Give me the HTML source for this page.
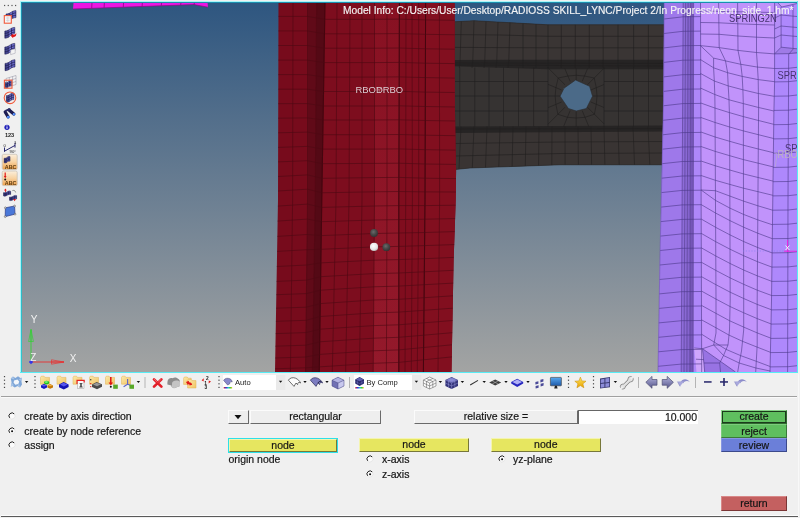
<!DOCTYPE html>
<html><head><meta charset="utf-8"><title>HyperMesh</title><style>
html,body{margin:0;padding:0;}
body{width:800px;height:518px;overflow:hidden;background:#f0f0f0;position:relative;font-family:"Liberation Sans",sans-serif;color:#111;}
#root{position:absolute;left:0;top:0;width:800px;height:518px;overflow:hidden;background:#f0f0f0;will-change:transform;}
.abs{position:absolute;}
#vp{position:absolute;left:20px;top:1px;width:778px;height:372px;background:#58ecf5;}
#vp::before{content:"";position:absolute;left:0;top:0;width:777px;height:371px;box-sizing:border-box;border-left:1px solid #a8f5f8;border-top:1px solid #a8f5f8;}
#vp::after{content:"";position:absolute;left:1px;top:1px;width:776px;height:370px;box-sizing:border-box;border-top:1px solid #1a8eae;background:linear-gradient(#1a8eae,#30c8d0) left top/1px 100% no-repeat;}
#vpin{position:absolute;left:2px;top:2px;width:775px;height:369px;overflow:hidden;background:linear-gradient(#2e5680,#a3a4a3);}
.t{position:absolute;white-space:nowrap;font-size:10.5px;line-height:14px;color:#151515;-webkit-text-stroke:0.2px #151515;}
.btn{position:absolute;box-sizing:border-box;text-align:center;font-size:10.5px;line-height:13px;color:#151515;white-space:nowrap;-webkit-text-stroke:0.2px #151515;}
.gray{background:#eeeeee;border-top:1px solid #fbfbfb;border-left:1px solid #fbfbfb;border-right:1px solid #6a6a6a;border-bottom:1px solid #6a6a6a;}
.yel{background:#e6e660;border-top:1px solid #f4f4b0;border-left:1px solid #f4f4b0;border-right:1px solid #77773a;border-bottom:1px solid #77773a;}
.radio{position:absolute;width:7px;height:7px;box-sizing:border-box;border-radius:50%;border:1px solid #777;border-right-color:#eee;border-bottom-color:#eee;background:#f6f6f6;}
.radio.on::after{content:"";position:absolute;left:1.5px;top:1.5px;width:2.5px;height:2.5px;border-radius:50%;background:#111;}
</style></head><body>
<div id="root">
<div id="vp"><div id="vpin"><svg width="775" height="369" viewBox="22 3 775 369" style="position:absolute;left:0;top:0;display:block">
<path d="M73.6 2 L73 9 L194 4.6 L208 7.2 L207.5 2 Z" fill="#ec16e2"/>
<path d="M92 2 L91.7 8.3 M104.4 2 L104.1 7.9 M123.6 2 L123.3 7.2 M142.4 2 L142.1 6.5 M161.6 2 L161.3 5.8 M181 2 L180.7 5.1 M194.4 2 L194.1 4.8 " stroke="#7a0a76" stroke-width="0.7" fill="none"/>
<path d="M73 9 L194 4.6 L208 7.2" stroke="#8a0c84" stroke-width="0.7" fill="none"/>
<path d="M454 21.8 L474 20.7 L548 24.8 L664 24.8 L664 164.8 L560 164.8 L470 168 L455 169.5 Z" fill="#363332"/>
<path d="M454 21.8 L474 20.7 L548 24.8 L664 24.8 L664 60 L454 60 Z" fill="#3a3534"/>
<path d="M454 132 L664 131 L664 164.8 L560 164.8 L470 168 L455 169.5 Z" fill="#393433"/>
<path d="M454 59.9 L664 59.8 L664 69.2 L548 69.2 L500 67.8 L454 66.2 Z" fill="#262424"/>
<path d="M454 126.5 L664 125.5 L664 131.5 L454 133 Z" fill="#262424"/>
<path d="M461.3 21.4 L460.1 60.2 M474 20.7 L472.8 60.2 M486 21.4 L484.8 60.2 M498 22 L496.8 60.2 M510 22.7 L508.8 60.2 M523 23.4 L523 60.2 M536 24.1 L536 60.2 M548 24.8 L548 60.2 M561.3 24.8 L561.3 60.2 M575.3 24.8 L575.3 60.2 M589.3 24.8 L589.3 60.2 M603.2 24.8 L603.2 60.2 M618 24.8 L618 60.2 M633.6 24.8 L633.6 60.2 M648.4 24.8 L648.4 60.2 M454 34.6 L500 35 L548 36.3 L664 36.3 M454 47.4 L548 47.8 L664 47.8 M454 63 L664 63.5 M454 65 L664 66 M460.1 60.2 L459.3 68 M472.8 60.2 L472 68 M484.8 60.2 L484 68 M496.8 60.2 L496 68 M508.8 60.2 L508 68 M523 60.2 L523 68 M536 60.2 L536 68 M548 60.2 L548 68 M561.3 60.2 L561.3 68 M575.3 60.2 L575.3 68 M589.3 60.2 L589.3 68 M603.2 60.2 L603.2 68 M618 60.2 L618 68 M633.6 60.2 L633.6 68 M648.4 60.2 L648.4 68 M459.8 67.5 L459.8 126.5 M474.8 67.5 L474.8 126.5 M489 67.5 L489 126.5 M503.5 67.5 L503.5 126.5 M518.5 67.5 L518.5 126.5 M533.6 67.5 L533.6 126.5 M548 67.5 L548 126.5 M604 67.5 L604 126.5 M618.5 67.5 L618.5 126.5 M633.5 67.5 L633.5 126.5 M648.5 67.5 L648.5 126.5 M455 81.5 L548 81.5 M604 81.5 L664 81.5 M455 96 L548 96 M604 96 L664 96 M455 111 L548 111 M604 111 L664 111 M576.2 80.2 L576.2 68.5 M582.2 81.4 L587.6 68.5 M587.4 84.8 L603.7 68.5 M590.8 90 L604 84.5 M592 96 L604 96 M590.8 102 L604 107.5 M587.4 107.2 L604 123.8 M582.2 110.6 L588.8 126.5 M576.2 111.8 L576.2 126.5 M570.2 110.6 L563.6 126.5 M565 107.2 L548 124.2 M561.6 102 L548 107.7 M560.4 96 L548 96 M561.6 90 L548 84.3 M565 84.8 L548.7 68.5 M570.2 81.4 L564.8 68.5 M576.2 75.3 L584.5 76 L594.2 78 L596.3 87.7 L597 96 L596.3 104.3 L594.4 114.2 L585 117.3 L576.2 118 L567.4 117.3 L557.9 114.3 L555.9 104.4 L555.2 96 L555.9 87.6 L558.2 78 L567.9 76 L576.2 75.3 M454 129 L664 128.5 M461 126.5 L459 168.9 M474 126.5 L472.3 167.9 M487 126.5 L485.5 167.4 M500 126.5 L498.8 166.9 M513 126.5 L512.1 166.5 M526 126.5 L525.3 166 M539 126.5 L538.6 165.5 M552 126.5 L551.8 165.1 M565 126.5 L565.1 164.8 M578 126.5 L578.4 164.8 M591 126.5 L591.6 164.8 M604 126.5 L604.9 164.8 M618 126.5 L619.2 164.8 M633 126.5 L634.5 164.8 M648 126.5 L649.8 164.8 M455 143.5 L560 142 L664 141.5 M455 156 L560 153.5 L664 153 " stroke="#201e1e" stroke-width="0.6" fill="none"/>
<path d="M575.6 80 L589.6 86.3 L592.5 96.2 L586.4 108.5 L576.3 111 L568.4 108.5 L560.1 96.2 L564 88.2 Z" fill="#4b6a88" stroke="#2a2a2c" stroke-width="0.6"/>
<path d="M454 21.8 L474 20.7 L548 24.8 L664 24.8" stroke="#2a2928" stroke-width="0.6" fill="none"/>
<path d="M664 164.8 L560 164.8 L470 168 L455 169.5" stroke="#2a2928" stroke-width="0.6" fill="none"/>
<path d="M278.5 2 L278 200 L275 372 L451.5 372 L453.6 260 L454.7 230 L455.7 200 L456.1 170 L455.6 150 L454.8 100 L454.6 2 Z" fill="#770b1c"/>
<path d="M307.5 2 L307.5 200 L305.5 372 L312.4 372 L315.2 200 L316.6 2 Z" fill="#600a18"/>
<path d="M316.6 2 L315.2 200 L312.4 372 L319.3 372 L321.8 200 L325 2 Z" fill="#540915"/>
<path d="M325 2 L321.8 200 L319.3 372 L373.2 372 L374.5 200 L374.5 2 Z" fill="#7d0d1e"/>
<defs><linearGradient id="bb" x1="0" x2="0" y1="0" y2="1"><stop offset="0" stop-color="#871122"/><stop offset="1" stop-color="#94192b"/></linearGradient></defs>
<path d="M374.5 2 L374.5 200 L373.2 372 L398.8 372 L398.8 200 L399.4 2 Z" fill="url(#bb)"/>
<path d="M399.4 2 L398.8 200 L398.8 372 L423.4 372 L425 200 L425.6 2 Z" fill="#800d1e"/>
<path d="M425.6 2 L425 200 L423.4 372 L451.5 372 L453.6 260 L454.7 230 L455.7 200 L456.1 170 L455.6 150 L454.8 100 L454.6 2 Z" fill="#820f1f"/>
<path d="M293 2 L292.6 200 L290.4 372 M307.5 2 L307.5 200 L305.5 372 M316.6 2 L315.2 200 L312.4 372 M325 2 L321.8 200 L319.3 372 M337 2 L336 200 L332.3 372 M350 2 L349 200 L345.6 372 M362 2 L362 200 L359.4 372 M374.5 2 L374.5 200 L373.2 372 M387 2 L387 200 L386.4 372 M399.4 2 L398.8 200 L398.8 372 M406 2 L405.7 200 L405 372 M412 2 L412.4 200 L411.3 372 M418.7 2 L418.7 200 L417.3 372 M425.6 2 L425 200 L423.4 372 M439.4 2 L439.6 200 L438 372 " stroke="#4e0812" stroke-width="0.6" fill="none"/>
<path d="M399.4 2 L398.8 200 L398.8 372 M425.6 2 L425 200 L423.4 372 M325 2 L321.8 200 L319.3 372" stroke="#3c060e" stroke-width="0.75" fill="none"/>
<path d="M278.5 16.4 L307.5 16.4 L324.7 19.3 L374.5 19.3 L399.3 19.1 L425.5 19.9 L454.6 20.3 M278.4 30.9 L307.5 30.9 L324.5 33.8 L374.5 33.8 L399.3 33.6 L425.5 34.3 L454.7 34.8 M278.4 45.5 L307.5 45.5 L324.3 48.2 L374.5 48.2 L399.3 48 L425.5 48.8 L454.7 49.2 M278.4 60.1 L307.5 60.1 L324 62.6 L374.5 62.6 L399.2 62.4 L425.4 63.2 L454.7 63.6 M278.3 74.6 L307.5 74.6 L323.8 77.1 L374.5 77.1 L399.2 76.9 L425.4 77.6 L454.8 78.1 M278.3 89.2 L307.5 89.2 L323.6 91.5 L374.5 91.5 L399.1 91.3 L425.3 92.1 L454.8 92.5 M278.2 103.7 L307.5 103.6 L323.3 106 L374.5 106 L399.1 105.8 L425.3 106.5 L454.9 107 M278.2 118.2 L307.5 117.9 L323.1 120 L374.5 120 L399 119.8 L425.2 120.5 L455.1 121 M278.2 132.8 L307.5 132.1 L322.9 134.7 L374.5 134.7 L399 134.5 L425.2 135.2 L455.4 135.7 M278.1 147.4 L307.5 146.4 L322.6 149.1 L374.5 149.1 L399 148.9 L425.2 149.7 L455.6 150.1 M278.1 161.9 L307.5 160.7 L322.4 163.7 L374.5 163.4 L398.9 163.2 L425.1 164 L456 164.4 M278.1 176.5 L307.5 174.9 L322.2 178.3 L374.5 177.6 L398.9 177.4 L425.1 178.2 L456 178.6 M278 191 L307.5 189.2 L321.9 192.8 L374.5 191.8 L398.8 191.5 L425 191.9 L455.8 192 M277.9 206.1 L307.4 204.1 L321.7 207.4 L374.5 206 L398.8 205.6 L424.9 205.6 L455.5 205.2 M277.6 221.1 L307.3 219.1 L321.5 221.7 L374.3 220 L398.8 219.6 L424.8 219.2 L455.1 218.6 M277.4 236.4 L307.1 234.5 L321.3 235.6 L374.2 233.5 L398.8 233 L424.7 232.5 L454.6 231.6 M277.1 251.4 L306.9 249.7 L321.1 249.3 L374.1 246.9 L398.8 246.4 L424.6 245.6 L454.2 244.6 M276.8 266.5 L306.7 265 L320.9 262.9 L374 260.2 L398.8 259.6 L424.4 258.7 L453.7 257.4 M276.6 281.4 L306.6 280.1 L320.7 276.7 L373.9 273.6 L398.8 273 L424.3 271.8 L453.4 270.3 M276.3 294.7 L306.4 293.6 L320.5 290.2 L373.8 286.8 L398.8 286.1 L424.2 284.7 L453.2 283.1 M276.1 308.2 L306.2 307.2 L320.3 303.6 L373.7 300 L398.8 299.3 L424.1 297.7 L452.9 295.8 M275.9 321.3 L306.1 320.3 L320.2 316.5 L373.6 312.9 L398.8 312.1 L423.9 310.3 L452.7 308.2 M275.7 333.6 L305.9 332.6 L320 329.2 L373.6 325.6 L398.8 324.8 L423.8 322.8 L452.5 320.5 M275.4 346.2 L305.8 345.2 L319.8 341.8 L373.5 338.2 L398.8 337.3 L423.7 335.2 L452.2 332.7 M275.2 358 L305.7 357 L319.6 354.4 L373.4 350.8 L398.8 349.9 L423.6 347.5 L452 344.8 M275.1 368.8 L305.5 367.8 L319.4 366.9 L373.3 363.3 L398.8 362.4 L423.5 359.8 L451.8 356.9 " stroke="#4e0812" stroke-width="0.6" fill="none"/>
<path d="M664.2 2 L663.5 100 L660 256 L658 372 L797 372 L797 256 L797 100 L797 2 Z" fill="#c193fb"/>
<path d="M664.2 2 L663.5 100 L660 256 L658 372 L681.2 372 L681.8 256 L682.7 100 L683.2 2 Z" fill="#9e78ea"/>
<path d="M683.2 2 L682.7 100 L681.8 256 L681.2 372 L684 372 L684.5 256 L685.2 100 L685.6 2 Z" fill="#8d6cd8"/>
<path d="M685.6 2 L685.2 100 L684.5 256 L684 372 L686.8 372 L687.2 256 L687.8 100 L688.1 2 Z" fill="#8a69d4"/>
<path d="M688.1 2 L687.8 100 L687.2 256 L686.8 372 L689.8 372 L690.1 256 L690.4 100 L690.6 2 Z" fill="#8564ce"/>
<path d="M690.6 2 L690.4 100 L690.1 256 L689.8 372 L693.2 372 L693.3 256 L693.5 100 L693.6 2 Z" fill="#7556b8"/>
<path d="M693.6 2 L693.5 100 L693.3 256 L693.2 372 L701.7 372 L701.3 256 L700.8 100 L700.5 2 Z" fill="#ae87f9"/>
<path d="M774.6 2 L774.6 53.9 L774.6 82 L773.9 112 L771.5 300 L770 372 L797 372 L797 300 L797 112 L797 82 L797 53.9 L797 2 Z" fill="#ae88fc"/>
<path d="M777 2 L781.8 7 L797 3.5 L797 2 Z" fill="#c79bfb"/>
<path d="M774.6 53.9 L781.1 47.2 L797 48.8 L797 53.9 Z" fill="#9f7be7"/>
<path d="M781.1 7 L781.1 47.2 L774.6 53.9 L774.6 2 L777 2 Z" fill="#b48df7"/>
<path d="M694.2 348 L702.5 348.7 L704.7 372 L696.5 372 Z" fill="#cfa6fc"/>
<path d="M702.5 348.7 L735.5 372 L704.7 372 Z" fill="#9873e3"/>
<path d="M683.2 2 L681.2 372 M685.6 2 L684 372 M688.1 2 L686.8 372 M690.6 2 L689.8 372 M693.6 2 L693.2 372 M700.5 2 L701.7 372 " stroke="#4b3787" stroke-width="0.6" fill="none"/>
<path d="M664.1 19 L683.1 16.8 L700.5 16.6 M664 33.5 L683 31.3 L700.6 31.1 M663.9 47.9 L683 45.7 L700.6 45.5 M663.8 62.4 L682.9 60.2 L700.7 60 M663.7 76.9 L682.8 74.7 L700.7 74.5 M663.6 91.4 L682.7 89.2 L700.8 89 M663.4 105.8 L682.7 103.6 L700.8 103.4 M663 120.3 L682.6 118.1 L700.9 117.9 M662.7 134.8 L682.5 132.6 L700.9 132.4 M662.4 149.2 L682.4 147 L701 146.8 M662.1 163.7 L682.3 161.5 L701 161.3 M661.7 178.2 L682.3 176 L701.1 175.8 M661.4 192.6 L682.2 190.4 L701.1 190.2 M661.1 207.1 L682.1 204.9 L701.2 204.7 M660.8 221.6 L682 219.4 L701.2 219.2 M660.4 236.1 L681.9 233.9 L701.3 233.7 M660.1 250.5 L681.9 248.3 L701.3 248.1 M659.8 265 L681.8 262.8 L701.3 262.6 M659.6 279.5 L681.7 277.3 L701.4 277.1 M659.3 293.9 L681.6 291.7 L701.4 291.5 M659.1 308.4 L681.6 306.2 L701.5 306 M658.8 322.9 L681.5 320.7 L701.5 320.5 M658.6 337.3 L681.4 335.1 L701.6 334.9 M658.3 351.8 L681.3 349.6 L701.6 349.4 M658.1 366.3 L681.2 364.1 L701.7 363.9 M700.5 11 L719.2 11.3 L738 11.8 L756.5 12.2 L774.6 12.5 M700.6 22.5 L719.2 22.8 L738 23.8 L756.5 24.5 L774.6 25 M700.6 34 L719.2 34.3 L738 36 L756.5 37.2 L774.6 38 M700.4 45.6 L719.2 47.6 L738 50.4 L756.5 52.5 L774.6 53.9 M700.4 45.6 L713.6 58.1 L725.5 60.9 L740.8 64.3 L757.5 67.1 L774.6 68.5 M713.6 58.1 L713.6 67.8 L714.3 81 L714.8 94.5 L715 108.2 L716 300 L716 333 L713.7 345 M718.6 2 L719.2 47.6 L725.5 60.9 L727.6 72.7 L728.2 85.9 L729 99.8 L729.6 120 L730.2 300 L729.5 330 L728 345 L723.5 355.5 L719.7 363 L720.5 372 M737.6 2 L738 50.4 L740.8 64.3 L742.2 76.4 L742.9 89.8 L743.3 103.6 L743.7 300 L743.7 330 L741.5 351 L739.2 363 L737.7 372 M756.5 2 L756.5 52.5 L757.5 67.1 L758.2 79.6 L758.4 93.5 L758.6 107.5 L757.2 300 L757.2 345 L755.7 372 M700.4 59.5 L713.6 67.8 L727.6 72.7 L742.2 76.4 L758.2 79.6 L774.6 81.7 M700.4 73.4 L714.3 81 L728.2 85.9 L742.9 89.8 L758.4 93.5 L774.2 96.3 M700.4 88 L714.8 94.5 L729 99.8 L743.3 103.6 L758.6 107.5 L773.9 111 M700.8 103 L715 108.1 L729.4 112.6 L743.3 116.6 L758.5 120.5 L773.7 124.3 M700.9 117.5 L715.1 122.5 L729.6 127 L743.4 130.9 L758.4 134.7 L773.6 138.5 M700.9 132 L715.1 137 L729.7 141.3 L743.4 145.2 L758.3 149 L773.4 152.7 M701 146.5 L715.2 151.4 L729.7 155.7 L743.4 159.6 L758.2 163.2 L773.2 166.9 M701 161 L715.3 165.8 L729.8 170 L743.4 173.9 L758.1 177.5 L773 181.1 M701.1 175.5 L715.4 180.3 L729.8 184.4 L743.5 188.2 L758 191.7 L772.8 195.3 M701.1 190 L715.4 190.7 L729.9 196.1 L743.5 201.1 L757.9 205.8 L772.6 210.2 M701.1 190 L715.5 200.4 L729.9 208.1 L743.5 214.4 L757.8 219.9 L772.5 224.8 M701.2 204.6 L715.5 213 L729.9 220.6 L743.6 227.2 L757.7 233.2 L772.3 238.7 M701.2 219 L715.6 227.3 L730 234.9 L743.6 241.5 L757.6 247.5 L772.1 252.9 M701.3 233.4 L715.7 241.7 L730 249.2 L743.6 255.7 L757.5 261.7 L771.9 267.1 M701.3 247.8 L715.8 256 L730.1 263.5 L743.6 270 L757.4 275.9 L771.7 281.3 M701.3 262.2 L715.8 270.4 L730.1 277.9 L743.7 284.3 L757.3 290.2 L771.6 295.5 M701.4 276.6 L715.9 284.7 L730.2 292.2 L743.7 298.5 L757.2 304.4 L771.3 309.7 M701.4 291 L716 299.1 L730 306.5 L743.7 312.8 L757.2 318.6 L771 323.9 M701.5 305.4 L716 313.4 L729.7 320.8 L743.7 327.1 L757.2 332.9 L770.7 338.1 M701.5 319.8 L716 327.8 L729 335.1 L742.5 341.3 L757.1 347.1 L770.4 352.3 M701.6 334.2 L714.2 342.1 L726.1 349.4 L740.6 355.6 L756.3 361.3 L770.1 366.5 M702.5 348.7 L713.7 345 L728 345 M713.7 345 L723.5 355.5 L739.2 363 L755.9 368 L770.1 371 M696 359.2 L703.6 359.6 M704 363 L719.7 363 M694.2 348 L702.5 348.7 L704.7 372 M702.5 348.7 L735.5 372 M774.6 2 L774.6 53.9 L774.6 82 L773.9 112 L771.5 300 L770 372 M774.6 53.9 L788.3 53.7 L797 52.7 M774.6 68.5 L788.3 68.3 L797 67.3 M774.6 81.9 L788.3 81.7 L797 80.7 M774.3 96.2 L788.3 96 L797 95 M773.9 110.4 L788.3 110.2 L797 109.2 M773.7 124.7 L788.3 124.5 L797 123.5 M773.6 138.9 L788.3 138.7 L797 137.7 M773.4 153.2 L788.3 153 L797 152 M773.2 167.4 L788.3 167.2 L797 166.2 M773 181.7 L788.3 181.5 L797 180.5 M772.8 195.9 L788.3 195.7 L797 194.7 M772.6 210.2 L788.3 210 L797 209 M772.5 224.4 L788.3 224.2 L797 223.2 M772.3 238.7 L788.3 238.5 L797 237.5 M772.1 252.9 L788.3 252.7 L797 251.7 M771.9 267.1 L788.3 266.9 L797 265.9 M771.7 281.4 L788.3 281.2 L797 280.2 M771.6 295.6 L788.3 295.4 L797 294.4 M771.3 309.9 L788.3 309.7 L797 308.7 M771 324.1 L788.3 323.9 L797 322.9 M770.7 338.4 L788.3 338.2 L797 337.2 M770.4 352.6 L788.3 352.4 L797 351.4 M770.1 366.9 L788.3 366.7 L797 365.7 M788.7 53.9 L788 200 L787.6 372 M777 2 L781.8 7 L797 3.5 M781.1 7 L781.1 47.2 L774.6 53.9 M781.1 47.2 L797 48.8 M789 53.9 L793.6 48.6 M793 5 L793 48.5 M774.6 18 L781.1 15 L797 16.5 M774.6 29 L781.1 26 L797 27.5 M774.6 38 L781.1 35 L797 36.5 " stroke="#4a3788" stroke-width="0.6" fill="none"/>
<path d="M664.2 2 L663.5 100 L660 256 L658 372" stroke="#6a52b0" stroke-width="0.6" fill="none"/>
<text x="343" y="13.8" font-family="Liberation Sans, sans-serif" font-size="10" textLength="450.5" stroke="#f4f4f4" stroke-width="0.15" lengthAdjust="spacingAndGlyphs" fill="#f4f4f4">Model Info: C:/Users/User/Desktop/RADIOSS SKILL_LYNC/Project 2/In Progress/neon_side_1.hm*</text>
<text x="355.5" y="92.6" font-family="Liberation Sans, sans-serif" font-size="9.4" textLength="47.7" lengthAdjust="spacingAndGlyphs" fill="#dccdd2">RBODRBO</text>
<text x="376" y="92.6" font-family="Liberation Sans, sans-serif" font-size="9.4" fill="#dccdd2" opacity="0.5">Y</text>
<text x="729" y="22.4" font-family="Liberation Sans, sans-serif" font-size="10" textLength="47.7" lengthAdjust="spacingAndGlyphs" fill="#47336f">SPRING2N</text>
<text x="777.6" y="78.8" font-family="Liberation Sans, sans-serif" font-size="10" textLength="47.7" lengthAdjust="spacingAndGlyphs" fill="#47336f">SPRING2N</text>
<text x="785" y="151.5" font-family="Liberation Sans, sans-serif" font-size="10" textLength="47.7" lengthAdjust="spacingAndGlyphs" fill="#47336f">SPRING2N</text>
<text x="777.5" y="157.8" font-family="Liberation Sans, sans-serif" font-size="10" textLength="33" lengthAdjust="spacingAndGlyphs" fill="#bdb2c4">RBODY</text>
<path d="M774.3 153 L777 153.5 L775.3 167" stroke="#bdb2c4" stroke-width="0.6" fill="none"/>
<path d="M743 251 L784 251" stroke="#7f7ff0" stroke-width="0.6" stroke-dasharray="1.2 1.6" fill="none"/>
<path d="M787.5 240 L787.5 252 M784 251.2 L797 251.2" stroke="#f020e0" stroke-width="0.9" fill="none"/>
<path d="M785.6 245.6 L789.4 250 M789.4 245.6 L785.6 250" stroke="#ffffff" stroke-width="0.9" fill="none"/>
<defs><radialGradient id="sd" cx="0.42" cy="0.36" r="0.7"><stop offset="0" stop-color="#6a6a6a"/><stop offset="0.5" stop-color="#484848"/><stop offset="1" stop-color="#2e2e2e"/></radialGradient><radialGradient id="sw" cx="0.42" cy="0.38" r="0.75"><stop offset="0" stop-color="#ffffff"/><stop offset="0.6" stop-color="#e4e4e4"/><stop offset="1" stop-color="#9a9a9a"/></radialGradient></defs>
<circle cx="374.05" cy="233" r="3.9" fill="url(#sd)"/>
<circle cx="386.35" cy="247.2" r="3.9" fill="url(#sd)"/>
<circle cx="374.05" cy="246.9" r="4.1" fill="url(#sw)"/>
<path d="M31 361.5 L31 329.5" stroke="#35d035" stroke-width="0.9" fill="none"/>
<path d="M31 329.5 L28.6 341.5 L33.4 341.5 Z M31 329.5 L31 341.5" stroke="#35d035" stroke-width="0.7" fill="none"/>
<path d="M31 362 L64 362" stroke="#e83030" stroke-width="0.9" fill="none"/>
<path d="M64 362 L51.5 359.8 L51.5 364.2 Z M64 362 L51.5 362" stroke="#e83030" stroke-width="0.7" fill="none"/>
<path d="M31 359.8 L33.2 362 L31 364.2 L28.8 362 Z" fill="#3535e8"/>
<text x="30.8" y="322.6" font-family="Liberation Sans, sans-serif" font-size="10" fill="#f2f2f2">Y</text>
<text x="30.3" y="361.2" font-family="Liberation Sans, sans-serif" font-size="10" fill="#f2f2f2">Z</text>
<text x="69.8" y="361.6" font-family="Liberation Sans, sans-serif" font-size="10" fill="#f2f2f2">X</text>
</svg></div></div>
<svg width="20" height="372" viewBox="0 0 20 372" style="position:absolute;left:0;top:0">
<defs><linearGradient id="mp" x1="0" x2="1" y1="0" y2="0"><stop offset="0" stop-color="#34347a"/><stop offset="0.6" stop-color="#7c7cdc"/><stop offset="1" stop-color="#5c5cb8"/></linearGradient></defs>
<rect x="3.9999999999999996" y="4.9" width="1.2" height="1.2" fill="#555"/>
<rect x="7.700000000000001" y="4.9" width="1.2" height="1.2" fill="#555"/>
<rect x="11.4" y="4.9" width="1.2" height="1.2" fill="#555"/>
<rect x="15.0" y="4.9" width="1.2" height="1.2" fill="#555"/>
<path d="M6 14 L7.7 13.8 L9.3 13.3 L11 12.3 L12.7 11.3 L14.3 10.8 L16 10.6 L16 17.6 L14.3 17.8 L12.7 18.3 L11 19.3 L9.3 20.3 L7.7 20.8 L6 21 Z" fill="url(#mp)" stroke="#1a1a4a" stroke-width="0.5"/><path d="M6 16.3 L7.7 16.1 L9.3 15.6 L11 14.6 L12.7 13.7 L14.3 13.1 L16 12.9 M6 18.7 L7.7 18.5 L9.3 17.9 L11 17 L12.7 16 L14.3 15.5 L16 15.3 M9.3 13.3 L9.3 20.3 M12.7 11.3 L12.7 18.3 " stroke="#1a1a4a" stroke-width="0.7" fill="none"/>
<rect x="4.3" y="15.6" width="7" height="7.6" fill="#f6f6f6" stroke="#f05a3c" stroke-width="1.1"/>
<path d="M6 18 L9.6 18 M6 20.3 L9.6 20.3 M7.8 16.6 L7.8 22" stroke="#c8c8d0" stroke-width="0.6"/>
<path d="M4.8 31 L6.5 30.8 L8.1 30.2 L9.8 29.2 L11.5 28.2 L13.1 27.6 L14.8 27.4 L14.8 34.6 L13.1 34.8 L11.5 35.4 L9.8 36.4 L8.1 37.4 L6.5 38 L4.8 38.2 Z" fill="url(#mp)" stroke="#1a1a4a" stroke-width="0.5"/><path d="M4.8 33.4 L6.5 33.2 L8.1 32.6 L9.8 31.6 L11.5 30.6 L13.1 30 L14.8 29.8 M4.8 35.8 L6.5 35.6 L8.1 35 L9.8 34 L11.5 33 L13.1 32.4 L14.8 32.2 M8.1 30.2 L8.1 37.4 M11.5 28.2 L11.5 35.4 " stroke="#1a1a4a" stroke-width="0.7" fill="none"/>
<path d="M9.5 36.5 L16 33 L16 38 L12 38.7 Z" fill="#f4f4f4"/>
<path d="M10.6 35.8 L13.2 33.6 L13.2 34.8 C15 34.9 16 34 16.2 32.8 C16.8 35.5 15.3 37.2 13.2 37.1 L13.2 38.2 Z" fill="#e01818"/>
<path d="M4.8 47 L6.5 46.8 L8.1 46.2 L9.8 45.2 L11.5 44.2 L13.1 43.6 L14.8 43.4 L14.8 50.6 L13.1 50.8 L11.5 51.4 L9.8 52.4 L8.1 53.4 L6.5 54 L4.8 54.2 Z" fill="url(#mp)" stroke="#1a1a4a" stroke-width="0.5"/><path d="M4.8 49.4 L6.5 49.2 L8.1 48.6 L9.8 47.6 L11.5 46.6 L13.1 46 L14.8 45.8 M4.8 51.8 L6.5 51.6 L8.1 51 L9.8 50 L11.5 49 L13.1 48.4 L14.8 48.2 M8.1 46.2 L8.1 53.4 M11.5 44.2 L11.5 51.4 " stroke="#1a1a4a" stroke-width="0.7" fill="none"/>
<path d="M10.6 50 L15.2 48.8 L15.2 53.2 L10.6 54.6 Z" fill="#f4f4f4" stroke="#9a9aa8" stroke-width="0.5"/>
<path d="M5 63.4 L6.7 63.2 L8.3 62.6 L10 61.6 L11.7 60.5 L13.3 59.9 L15 59.7 L15 67 L13.3 67.2 L11.7 67.8 L10 68.9 L8.3 69.9 L6.7 70.5 L5 70.7 Z" fill="url(#mp)" stroke="#1a1a4a" stroke-width="0.5"/><path d="M5 65.8 L6.7 65.6 L8.3 65 L10 64 L11.7 63 L13.3 62.4 L15 62.1 M5 68.3 L6.7 68 L8.3 67.4 L10 66.4 L11.7 65.4 L13.3 64.8 L15 64.6 M8.3 62.6 L8.3 69.9 M11.7 60.5 L11.7 67.8 " stroke="#1a1a4a" stroke-width="0.7" fill="none"/>
<path d="M6 78.5 L16 75.5 L16 84.5 L6 87.5 Z M6 81.5 L16 78.5 M6 84.5 L16 81.5 M9.3 77.5 L9.3 86.5 M12.6 76.5 L12.6 85.5" fill="#f4f4f4" stroke="#8a8a9c" stroke-width="0.5"/>
<path d="M5.4 82.6 L6.4 82.7 L7.4 82.5 L8.4 81.8 L9.4 81.1 L10.4 80.9 L11.4 81 L11.4 86 L10.4 85.9 L9.4 86.1 L8.4 86.8 L7.4 87.5 L6.4 87.7 L5.4 87.6 Z" fill="url(#mp)" stroke="#1a1a4a" stroke-width="0.5"/><path d="M5.4 84.3 L6.4 84.4 L7.4 84.1 L8.4 83.5 L9.4 82.8 L10.4 82.5 L11.4 82.7 M5.4 85.9 L6.4 86.1 L7.4 85.8 L8.4 85.1 L9.4 84.5 L10.4 84.2 L11.4 84.3 M7.4 82.5 L7.4 87.5 M9.4 81.1 L9.4 86.1 " stroke="#1a1a4a" stroke-width="0.7" fill="none"/>
<rect x="4.4" y="80.2" width="7.6" height="8" fill="none" stroke="#f05a3c" stroke-width="1.1"/>
<path d="M6.4 95.6 L7.7 95.6 L8.8 95.1 L10.1 94.3 L11.4 93.5 L12.5 93 L13.8 93 L13.8 99.6 L12.5 99.6 L11.4 100.1 L10.1 100.9 L8.8 101.7 L7.7 102.2 L6.4 102.2 Z" fill="url(#mp)" stroke="#1a1a4a" stroke-width="0.5"/><path d="M6.4 97.8 L7.7 97.8 L8.8 97.3 L10.1 96.5 L11.4 95.7 L12.5 95.2 L13.8 95.2 M6.4 100 L7.7 100 L8.8 99.5 L10.1 98.7 L11.4 97.9 L12.5 97.4 L13.8 97.4 M8.9 95.1 L8.9 101.7 M11.3 93.5 L11.3 100.1 " stroke="#1a1a4a" stroke-width="0.7" fill="none"/>
<circle cx="10" cy="97.8" r="5.8" fill="none" stroke="#f05a3c" stroke-width="1.1"/>
<path d="M5.2 112 L8 116.8" stroke="#1c1c50" stroke-width="3.2" stroke-linecap="round"/>
<path d="M9 110 L13.8 114" stroke="#1c1c50" stroke-width="3.2" stroke-linecap="round"/>
<path d="M6 110.6 L9.6 109.2" stroke="#2a2a66" stroke-width="2" stroke-linecap="round"/>
<circle cx="8.3" cy="117.2" r="1.35" fill="#3f7df2"/><circle cx="14" cy="114.3" r="1.3" fill="#3f7df2"/>
<circle cx="7.9" cy="116.8" r="0.5" fill="#9cc4ff"/><circle cx="13.6" cy="113.9" r="0.5" fill="#9cc4ff"/>
<circle cx="7" cy="127.3" r="2.6" fill="#2020b8"/>
<rect x="6.5" y="126.6" width="1" height="2.2" fill="#fff"/><rect x="6.5" y="125.4" width="1" height="0.8" fill="#fff"/>
<text x="4.9" y="137" font-family="Liberation Sans, sans-serif" font-size="5.6" font-weight="bold" fill="#222">123</text>
<path d="M4.5 151.8 L4.5 147.5 M4.5 151.2 L15 145.4 M15 142.6 L15 147.6" stroke="#26266e" stroke-width="1" fill="none"/>
<text x="3.4" y="147.3" font-family="Liberation Sans, sans-serif" font-size="4.2" fill="#222">0</text>
<text x="14" y="144" font-family="Liberation Sans, sans-serif" font-size="4.2" fill="#222">1</text>
<text x="9.6" y="152.6" font-family="Liberation Sans, sans-serif" font-size="4.2" fill="#222">90°</text>
<defs><linearGradient id="og" x1="0" x2="0" y1="0" y2="1"><stop offset="0" stop-color="#fbefdc"/><stop offset="0.5" stop-color="#f8d3a2"/><stop offset="1" stop-color="#efa04a"/></linearGradient></defs>
<rect x="2.2" y="154.3" width="15" height="15.2" rx="1.5" fill="url(#og)" stroke="#c9c2b6" stroke-width="0.8"/>
<rect x="2.2" y="171" width="15" height="14.6" rx="1.5" fill="url(#og)" stroke="#c9c2b6" stroke-width="0.8"/>
<path d="M4.2 158.2 L5.2 158.3 L6.1 158.1 L7.1 157.4 L8.1 156.7 L9 156.5 L10 156.6 L10 161.2 L9 161.1 L8.1 161.3 L7.1 162 L6.1 162.7 L5.2 162.9 L4.2 162.8 Z" fill="url(#mp)" stroke="#1a1a4a" stroke-width="0.5"/><path d="M4.2 159.7 L5.2 159.9 L6.1 159.6 L7.1 158.9 L8.1 158.3 L9 158 L10 158.1 M4.2 161.3 L5.2 161.4 L6.1 161.1 L7.1 160.5 L8.1 159.8 L9 159.5 L10 159.7 M6.1 158.1 L6.1 162.7 M8.1 156.7 L8.1 161.3 " stroke="#1a1a4a" stroke-width="0.7" fill="none"/>
<text x="4.8" y="168.6" font-family="Liberation Sans, sans-serif" font-size="5.4" font-weight="bold" fill="#5a3a10">ABC</text>
<path d="M5.2 172.4 L5.2 177" stroke="#e01818" stroke-width="1.2"/><path d="M3.9 176 L6.5 176 L5.2 178.4 Z" fill="#e01818"/><circle cx="5.2" cy="179.6" r="1" fill="#111"/>
<text x="4.8" y="184.6" font-family="Liberation Sans, sans-serif" font-size="5.4" font-weight="bold" fill="#5a3a10">ABC</text>
<path d="M3.6 192.6 L4.8 192.8 L5.9 192.5 L7.1 191.9 L8.3 191.3 L9.4 191 L10.6 191.2 L10.6 194.6 L9.4 194.4 L8.3 194.7 L7.1 195.3 L5.9 195.9 L4.8 196.2 L3.6 196 Z" fill="url(#mp)" stroke="#1a1a4a" stroke-width="0.5"/><path d="M3.6 193.7 L4.8 193.9 L5.9 193.7 L7.1 193 L8.3 192.4 L9.4 192.2 L10.6 192.3 M3.6 194.9 L4.8 195 L5.9 194.8 L7.1 194.2 L8.3 193.5 L9.4 193.3 L10.6 193.5 M5.9 192.5 L5.9 195.9 M8.3 191.3 L8.3 194.7 " stroke="#1a1a4a" stroke-width="0.7" fill="none"/>
<path d="M9.6 197 L10.8 197.2 L11.9 196.9 L13.1 196.3 L14.3 195.7 L15.4 195.4 L16.6 195.6 L16.6 199 L15.4 198.8 L14.3 199.1 L13.1 199.7 L11.9 200.3 L10.8 200.6 L9.6 200.4 Z" fill="url(#mp)" stroke="#1a1a4a" stroke-width="0.5"/><path d="M9.6 198.1 L10.8 198.3 L11.9 198.1 L13.1 197.4 L14.3 196.8 L15.4 196.6 L16.6 196.7 M9.6 199.3 L10.8 199.4 L11.9 199.2 L13.1 198.6 L14.3 197.9 L15.4 197.7 L16.6 197.9 M11.9 196.9 L11.9 200.3 M14.3 195.7 L14.3 199.1 " stroke="#1a1a4a" stroke-width="0.7" fill="none"/>
<path d="M5.4 188.4 L4 190.6 L6.8 190.6 Z M5 190.4 L5.8 190.4 L5.8 192 L5 192 Z" fill="#e01818"/>
<path d="M14.6 201.2 L13.2 199 L16 199 Z" fill="#e01818"/>
<path d="M12.4 190.6 C14 190 15.4 190.8 15.6 192.4" stroke="#444" stroke-width="0.6" fill="none"/>
<path d="M5.4 207.8 L14.6 206 L15 214.2 L5.2 216.6 Z" fill="#4a78d8" stroke="#2a3a8a" stroke-width="0.7"/>
<circle cx="5.4" cy="207.8" r="0.9" fill="#f0f0f0" stroke="#444" stroke-width="0.5"/>
<circle cx="14.6" cy="206" r="0.9" fill="#f0f0f0" stroke="#444" stroke-width="0.5"/>
<circle cx="15" cy="214.2" r="0.9" fill="#f0f0f0" stroke="#444" stroke-width="0.5"/>
<circle cx="5.2" cy="216.6" r="0.9" fill="#f0f0f0" stroke="#444" stroke-width="0.5"/>
</svg>
<svg width="800" height="24" viewBox="0 373 800 24" style="position:absolute;left:0;top:373px">
<defs><linearGradient id="fg" x1="0" x2="1" y1="0" y2="1"><stop offset="0" stop-color="#fbe9a8"/><stop offset="1" stop-color="#f2c465"/></linearGradient><linearGradient id="rb" x1="0" x2="1" y1="0" y2="0"><stop offset="0" stop-color="#e02020"/><stop offset="0.3" stop-color="#3030e0"/><stop offset="0.55" stop-color="#20c8c8"/><stop offset="0.75" stop-color="#30d030"/><stop offset="1" stop-color="#f0c020"/></linearGradient><linearGradient id="ar" x1="0" x2="0" y1="0" y2="1"><stop offset="0" stop-color="#b4b4dc"/><stop offset="1" stop-color="#55558c"/></linearGradient><linearGradient id="mon" x1="0" x2="0" y1="0" y2="1"><stop offset="0" stop-color="#58a8f0"/><stop offset="1" stop-color="#1e5aa8"/></linearGradient><linearGradient id="st" x1="0" x2="0" y1="0" y2="1"><stop offset="0" stop-color="#ffe860"/><stop offset="1" stop-color="#e8a000"/></linearGradient></defs>
<rect x="3.9" y="376.0" width="1.2" height="1.2" fill="#444"/><rect x="3.9" y="379.59999999999997" width="1.2" height="1.2" fill="#444"/><rect x="3.9" y="383.2" width="1.2" height="1.2" fill="#444"/><rect x="3.9" y="386.79999999999995" width="1.2" height="1.2" fill="#444"/>
<path d="M10.8 378.4 L13 376.4 L15.4 378 L18 376.2 L20.4 378 L21.8 377.8 L21.4 381 L22 384.6 L20 387.4 L17.6 386 L14.8 387.6 L12.4 386 L10.8 386.4 L11.6 382.4 Z" fill="#7ea6d8"/>
<path d="M14 380.4 L17.4 379.4 L19.2 381.6 L18.4 384 L15.4 384.8 L13.6 382.8 Z" fill="#f2f6fb"/>
<path d="M10.8 378.4 L13 376.4 L14.6 379.6 Z M21.8 377.8 L21.4 381 L18.6 379.6 Z M20 387.4 L17.6 386 L19 383.6 Z M10.8 386.4 L11.6 382.4 L14 385.2 Z" fill="#a8c4e6"/>
<path d="M24.9 381.1 L28.3 381.1 L26.6 383.1 Z" fill="#111"/>
<rect x="34.4" y="376.0" width="1.2" height="1.2" fill="#444"/><rect x="34.4" y="379.59999999999997" width="1.2" height="1.2" fill="#444"/><rect x="34.4" y="383.2" width="1.2" height="1.2" fill="#444"/><rect x="34.4" y="386.79999999999995" width="1.2" height="1.2" fill="#444"/>
<path d="M40.5 377.4 L41.3 376.2 L44.1 376.2 L44.9 377.4 L49.5 377.4 L49.5 384.2 L40.5 384.2 Z" fill="url(#fg)" stroke="#e0b052" stroke-width="0.5"/>
<ellipse cx="46.6" cy="382.6" rx="2.6" ry="1.9" fill="#20c020"/><ellipse cx="46.4" cy="382" rx="1.6" ry="0.9" fill="#70f070"/>
<path d="M41 385.4 L44 383.8 L47 385.4 L47 387.6 L44 389 L41 387.6 Z" fill="#1818c0"/><path d="M41.6 385.4 L44 384.4 L46.4 385.4 L44 386.4 Z" fill="#5a5af0"/>
<path d="M47.4 385.4 L50.2 384 L53 385.4 L53 387.4 L50.2 388.8 L47.4 387.4 Z" fill="#c47808"/><path d="M48 385.4 L50.2 384.5 L52.4 385.4 L50.2 386.3 Z" fill="#f0b040"/>
<path d="M57 377.4 L57.8 376.2 L60.6 376.2 L61.4 377.4 L66 377.4 L66 384.2 L57 384.2 Z" fill="url(#fg)" stroke="#e0b052" stroke-width="0.5"/>
<path d="M59 384.6 L63.6 382 L68.6 384.4 L68.6 387 L63.8 389.4 L59 387.2 Z" fill="#1414b4"/><path d="M60 384.6 L63.6 382.8 L67.6 384.5 L63.8 386.4 Z" fill="#5858ee"/>
<path d="M73 377.4 L73.8 376.2 L76.6 376.2 L77.4 377.4 L82 377.4 L82 384.2 L73 384.2 Z" fill="url(#fg)" stroke="#e0b052" stroke-width="0.5"/>
<rect x="77.4" y="380.6" width="6.6" height="7.8" fill="#f8f8f8" stroke="#888" stroke-width="0.4"/>
<path d="M77 384 L77 380.4 L84.2 380.4 L84.2 382.4" stroke="#e82020" stroke-width="1.1" fill="none"/>
<path d="M79.4 383 L82.6 383 L81.6 385 L82.8 387.4 L79.2 387.4 L80.4 385 Z" fill="#555"/>
<path d="M89.5 377.4 L90.3 376.2 L93.1 376.2 L93.9 377.4 L98.5 377.4 L98.5 384.2 L89.5 384.2 Z" fill="url(#fg)" stroke="#e0b052" stroke-width="0.5"/>
<path d="M92 384.4 L96.6 382 L102 384.2 L102 386.8 L97 389.2 L92 387 Z" fill="#4a4a4a"/><path d="M93 384.4 L96.6 382.8 L101 384.3 L97 386.2 Z" fill="#9a9a9a"/>
<rect x="90.2" y="379" width="1.1" height="1.4" fill="#333"/><rect x="90.2" y="383" width="1.1" height="1.2" fill="#e02020"/><rect x="90.2" y="386" width="1.1" height="1.2" fill="#e02020"/>
<path d="M105.5 377.4 L106.3 376.2 L109.1 376.2 L109.9 377.4 L114.5 377.4 L114.5 384.2 L105.5 384.2 Z" fill="url(#fg)" stroke="#e0b052" stroke-width="0.5"/>
<path d="M110.8 377 L110.8 383.4" stroke="#e01010" stroke-width="1.5"/><path d="M108.6 382.6 L113 382.6 L110.8 385.6 Z" fill="#e01010"/><circle cx="110.8" cy="386.8" r="1" fill="#111"/>
<rect x="113.2" y="384.6" width="4.6" height="4.2" fill="#58a828"/>
<path d="M121.5 377.4 L122.3 376.2 L125.1 376.2 L125.9 377.4 L130.5 377.4 L130.5 384.2 L121.5 384.2 Z" fill="url(#fg)" stroke="#e0b052" stroke-width="0.5"/>
<path d="M127.6 379 L127.6 384.2 L123.6 386.8 M127.6 384.2 L131 385.6" stroke="#5a64c8" stroke-width="1.1" fill="none"/>
<rect x="129.4" y="384.6" width="4.6" height="4.2" fill="#58a828"/>
<path d="M136.7 381.1 L140.1 381.1 L138.4 383.1 Z" fill="#111"/>
<rect x="144.5" y="377" width="1" height="11" fill="#b4b4b4"/>
<path d="M154 379.4 L161.4 386.6 M161.4 379.4 L154 386.6" stroke="#e21e28" stroke-width="2.7" stroke-linecap="round"/>
<path d="M154.2 379.2 L157 382 M161.2 379.2 L158.6 381.8" stroke="#f26a70" stroke-width="0.9" stroke-linecap="round"/>
<path d="M167.4 382.4 C167.4 379 170 377.6 172.6 378.2 C174 377.2 176.4 377.2 177.6 378.6 C179.6 379.2 180.2 381 180 383.4 L180 386 L174 388.2 L171.6 387 L171.4 385.6 L167.4 384.6 Z" fill="#8c8c8c"/>
<path d="M172 383.2 C172.4 381 175 380 177.6 380.6 L180 381.6 L180 386 L174 388.2 L172 387 Z" fill="#c4c4c4"/>
<path d="M183.6 378.2 L184.4 377 L187.2 377 L188 378.2 L191.2 378.2 L191.2 384.4 L183.6 384.4 Z" fill="url(#fg)" stroke="#e0b052" stroke-width="0.5"/>
<path d="M187.6 380.6 L188.4 379.4 L191.2 379.4 L192 380.6 L196 380.6 L196 388 L187.6 388 Z" fill="url(#fg)" stroke="#e0b052" stroke-width="0.5"/>
<path d="M186 382 L189 380.8 L188.8 382.2 C190.6 382 192 383 192.2 384.8 L189.6 385.4 C189.6 384.4 189 384 188.2 384.2 L188.2 385.4 Z" fill="#e01818"/>
<text x="206" y="380.4" font-family="Liberation Sans, sans-serif" font-size="4.8" font-weight="bold" fill="#222">2</text>
<text x="204.2" y="384.6" font-family="Liberation Sans, sans-serif" font-size="4.8" font-weight="bold" fill="#222">1</text>
<text x="204.4" y="388.6" font-family="Liberation Sans, sans-serif" font-size="4.8" font-weight="bold" fill="#222">3</text>
<path d="M201.6 380.2 L203.8 378.2 L203.6 381.4 Z M211 381.4 L208.6 383.6 L208.8 380.6 Z" fill="#e01818"/>
<rect x="218.4" y="376.0" width="1.2" height="1.2" fill="#444"/><rect x="218.4" y="379.59999999999997" width="1.2" height="1.2" fill="#444"/><rect x="218.4" y="383.2" width="1.2" height="1.2" fill="#444"/><rect x="218.4" y="386.79999999999995" width="1.2" height="1.2" fill="#444"/>
<rect x="223" y="375" width="53" height="15" fill="#ffffff"/><rect x="276" y="375" width="9.4" height="15" fill="#eaeaea"/>
<path d="M223.6 380.4 C224.6 378.4 227.4 377.6 230 378.8 C231.2 379.4 232 380.6 232.2 382 L231 381.6 C230.4 381.8 229.8 382.6 229.6 384 L227.6 385 Z" fill="#8888cc" stroke="#444470" stroke-width="0.5"/>
<rect x="223.6" y="387" width="8.6" height="1.6" rx="0.6" fill="url(#rb)"/>
<text x="235" y="385" font-family="Liberation Sans, sans-serif" font-size="7.6" fill="#1a1a1a">Auto</text>
<path d="M278.9 380.7 L282.3 380.7 L280.6 382.7 Z" fill="#111"/>
<path d="M288.4 380.2 C289.6 378 292.6 377 295.6 378.2 C297.8 379.2 299.8 381 300.6 383 L299.2 382.4 C298.2 382.4 297.6 383.2 297.6 384.6 L296 383 L294 386.4 Z" fill="#fbfbfb" stroke="#333" stroke-width="0.7"/>
<path d="M303.3 381.1 L306.7 381.1 L305 383.1 Z" fill="#111"/>
<path d="M310.4 380.2 C311.6 378 314.6 377 317.6 378.2 C319.8 379.2 321.8 381 322.6 383 L321.2 382.4 C320.2 382.4 319.6 383.2 319.6 384.6 L318 383 L316 386.4 Z" fill="#7c7cc0" stroke="#2c2c58" stroke-width="0.7"/>
<path d="M318 383 C318.6 381.6 320 381 321.4 381.6" stroke="#1c1c40" stroke-width="1" fill="none"/>
<path d="M325.3 381.1 L328.7 381.1 L327 383.1 Z" fill="#111"/>
<path d="M332 380.2 L338 377.2 L344 380.2 L344 386 L338 389 L332 386 Z" fill="#8c8cc8"/>
<path d="M332 380.2 L338 377.2 L344 380.2 L338 383 Z" fill="#b4b4e4"/><path d="M338 383 L344 380.2 L344 386 L338 389 Z" fill="#c8c8ee"/><path d="M332 380.2 L338 383 L338 389 L332 386 Z" fill="#7070b4"/>
<path d="M332 380.2 L338 377.2 L344 380.2 L344 386 L338 389 L332 386 Z M332 380.2 L338 383 L344 380.2 M338 383 L338 389" fill="none" stroke="#4a4a80" stroke-width="0.5"/>
<rect x="349" y="377" width="1" height="11" fill="#b4b4b4"/>
<rect x="354" y="375" width="58" height="15" fill="#ffffff"/><rect x="412" y="375" width="9.4" height="15" fill="#eaeaea"/>
<path d="M355.2 379.4 L359.6 377 L364 379.4 L364 383.6 L359.6 386 L355.2 383.6 Z" fill="#28286a"/><path d="M355.8 379.4 L359.6 377.6 L363.4 379.4 L359.6 381.2 Z" fill="#6464b4"/>
<path d="M355.2 381.4 L359.6 383.6 L364 381.4 M357.4 380.4 L357.4 384.8 M361.8 380.4 L361.8 384.8" stroke="#8080d0" stroke-width="0.4" fill="none"/>
<rect x="355.2" y="387" width="8.6" height="1.6" rx="0.6" fill="url(#rb)"/>
<text x="366.5" y="385" font-family="Liberation Sans, sans-serif" font-size="7.6" fill="#1a1a1a">By Comp</text>
<path d="M414.7 380.7 L418.1 380.7 L416.4 382.7 Z" fill="#111"/>
<path d="M423.4 380 L429.6 377 L436 380 L436 386 L429.6 389 L423.4 386 Z" fill="#fafafa"/>
<path d="M423.4 380 L429.6 377 L436 380 L436 386 L429.6 389 L423.4 386 Z M423.4 380 L429.6 383 L436 380 M429.6 383 L429.6 389 M423.4 383 L429.6 386 L436 383 M426.5 378.5 L432.8 381.5 L432.8 387.5 M432.8 378.5 L426.5 381.5 L426.5 387.5" fill="none" stroke="#555" stroke-width="0.5"/>
<path d="M438.7 381.1 L442.1 381.1 L440.4 383.1 Z" fill="#111"/>
<path d="M445.4 380 L451.6 377 L458 380 L458 386 L451.6 389 L445.4 386 Z" fill="#34347a"/>
<path d="M446.2 380 L451.6 377.6 L457.2 380 L451.6 382.6 Z" fill="#8080cc"/>
<path d="M445.4 380 L451.6 383 L458 380 M451.6 383 L451.6 389 M445.4 383 L451.6 386 L458 383 M448.5 378.5 L454.8 381.5 L454.8 387.5 M454.8 378.5 L448.5 381.5 L448.5 387.5" fill="none" stroke="#9c9ce0" stroke-width="0.45"/>
<path d="M460.7 381.1 L464.1 381.1 L462.4 383.1 Z" fill="#111"/>
<path d="M470.2 385 L478 380.4" stroke="#333" stroke-width="1.1"/>
<path d="M482.5 381.1 L485.9 381.1 L484.2 383.1 Z" fill="#111"/>
<path d="M489.2 382.4 L495.2 379.4 L501.2 382.4 L495.2 385.6 Z" fill="#3c3c3c"/><path d="M492.2 380.9 L498.2 384 M498.2 380.9 L492.2 384" stroke="#c8c8c8" stroke-width="0.5"/>
<path d="M504.3 381.1 L507.7 381.1 L506 383.1 Z" fill="#111"/>
<path d="M511.2 382 L517.2 378.8 L523.2 382 L523.2 383.6 L517.2 387 L511.2 383.6 Z" fill="#2828c0"/><path d="M512.4 382 L517.2 379.6 L522 382 L517.2 384.6 Z" fill="#b0b0f6"/>
<path d="M526.3 381.1 L529.7 381.1 L528 383.1 Z" fill="#111"/>
<path d="M535.4 382.0 L538.4 381.2 L538.4 383.8 L535.4 384.59999999999997 Z" fill="#4a4a98"/>
<path d="M540.4 379.8 L543.4 379 L543.4 381.6 L540.4 382.4 Z" fill="#4a4a98"/>
<path d="M535.6 386.0 L538.6 385.2 L538.6 387.8 L535.6 388.59999999999997 Z" fill="#4a4a98"/>
<path d="M540.6 383.8 L543.6 383 L543.6 385.6 L540.6 386.4 Z" fill="#4a4a98"/>
<rect x="550.4" y="377.4" width="11" height="8.4" rx="0.6" fill="url(#mon)" stroke="#3a3a3a" stroke-width="0.6"/>
<path d="M555 385.8 L556.8 385.8 L557.6 388.4 L554.2 388.4 Z" fill="#222"/>
<rect x="567.9" y="376.0" width="1.2" height="1.2" fill="#444"/><rect x="567.9" y="379.59999999999997" width="1.2" height="1.2" fill="#444"/><rect x="567.9" y="383.2" width="1.2" height="1.2" fill="#444"/><rect x="567.9" y="386.79999999999995" width="1.2" height="1.2" fill="#444"/>
<path d="M580.4 377.1 L581.9 380.9 L586 381.2 L582.9 383.8 L583.9 387.8 L580.4 385.6 L576.9 387.8 L577.9 383.8 L574.8 381.2 L578.9 380.9 Z" fill="url(#st)" stroke="#c88a00" stroke-width="0.5"/>
<rect x="592.9" y="376.0" width="1.2" height="1.2" fill="#444"/><rect x="592.9" y="379.59999999999997" width="1.2" height="1.2" fill="#444"/><rect x="592.9" y="383.2" width="1.2" height="1.2" fill="#444"/><rect x="592.9" y="386.79999999999995" width="1.2" height="1.2" fill="#444"/>
<path d="M600 378.6 L610 377 L610 387.2 L600 388.6 Z" fill="#3a3a70"/>
<path d="M600.8 379.4 L604.4 378.8 L604.4 382.6 L600.8 383 Z M605.4 378.6 L609.2 378 L609.2 382 L605.4 382.5 Z M600.8 384 L604.4 383.6 L604.4 387.2 L600.8 387.7 Z M605.4 383.5 L609.2 383 L609.2 386.5 L605.4 387 Z" fill="#8c8cd8"/>
<path d="M613.7 381.1 L617.1 381.1 L615.4 383.1 Z" fill="#111"/>
<path d="M623.4 386.4 L630.2 379.6" stroke="#6e6e6e" stroke-width="3.6" stroke-linecap="butt"/>
<circle cx="622.8" cy="386.6" r="2.5" fill="#e2e2e2" stroke="#6e6e6e" stroke-width="0.7"/>
<circle cx="630.6" cy="379.2" r="2.7" fill="#e2e2e2" stroke="#6e6e6e" stroke-width="0.7"/>
<path d="M623.4 386.4 L630.2 379.6" stroke="#e2e2e2" stroke-width="2.3" stroke-linecap="butt"/>
<path d="M620 389.4 L622.6 386.8" stroke="#f0f0f0" stroke-width="1.7"/>
<path d="M630.8 379 L633.6 376.2" stroke="#f0f0f0" stroke-width="1.8"/>
<rect x="638" y="377" width="1" height="11" fill="#b4b4b4"/>
<path d="M645.8 382.3 L652 376.4 L652 379.5 L657 379.5 L657 385.2 L652 385.2 L652 388.3 Z" fill="url(#ar)" stroke="#4e4e72" stroke-width="0.7" stroke-linejoin="round"/>
<path d="M673.4 382.3 L667.2 376.4 L667.2 379.5 L662.2 379.5 L662.2 385.2 L667.2 385.2 L667.2 388.3 Z" fill="url(#ar)" stroke="#4e4e72" stroke-width="0.7" stroke-linejoin="round"/>
<path d="M680.6 382.4 C682 378.6 687 378 689.8 381.8 C687 380.4 684.6 381 683.2 383.2 Z" fill="#8c8cca"/><path d="M677.4 381.6 L684 381.2 L680 386.4 Z" fill="#a8a8dc"/><path d="M677.4 381.6 L680 386.4" stroke="#7878b8" stroke-width="0.5"/>
<rect x="695" y="377" width="1" height="11" fill="#b4b4b4"/>
<rect x="704" y="381.2" width="7.6" height="1.5" fill="#26266a"/>
<rect x="720" y="381.2" width="8" height="1.5" fill="#26266a"/><rect x="723.2" y="378" width="1.6" height="8" fill="#26266a"/>
<path d="M737.6 382.4 C739 378.6 744 378 746.8 381.8 C744 380.4 741.6 381 740.2 383.2 Z" fill="#8c8cca"/><path d="M734.4 381.6 L741 381.2 L737 386.4 Z" fill="#a8a8dc"/><path d="M734.4 381.6 L737 386.4" stroke="#7878b8" stroke-width="0.5"/>
</svg>
<div class="abs" style="left:1px;top:396px;width:796px;height:1px;background:#a0a0a0"></div>
<div class="abs" style="left:1px;top:397px;width:796px;height:1px;background:#fafafa"></div>
<div class="abs" style="left:1px;top:515px;width:797px;height:1px;background:#fdfdfd"></div>
<div class="abs" style="left:1px;top:516px;width:797px;height:1px;background:#5a5a5a"></div>
<div class="abs" style="left:798px;top:374px;width:1px;height:143px;background:#f8f8f8"></div>
<div class="abs" style="left:798px;top:0px;width:2px;height:374px;background:#f4f2f2"></div>
<svg class="abs" style="left:8.3px;top:412.3px" width="8" height="8" viewBox="0 0 8 8"><circle cx="4" cy="4" r="2.9" fill="#fbfbfb"/><path d="M1.7 5.9 A3 3 0 0 1 6.3 2" stroke="#1e1e1e" stroke-width="1" fill="none"/><path d="M6.3 2 A3 3 0 0 1 1.7 5.9" stroke="#dedede" stroke-width="0.6" fill="none"/></svg>
<div class="t" style="left:24.3px;top:409.4px;">create by axis direction</div>
<svg class="abs" style="left:8.3px;top:426.7px" width="8" height="8" viewBox="0 0 8 8"><circle cx="4" cy="4" r="2.9" fill="#fbfbfb"/><path d="M1.7 5.9 A3 3 0 0 1 6.3 2" stroke="#1e1e1e" stroke-width="1" fill="none"/><path d="M6.3 2 A3 3 0 0 1 1.7 5.9" stroke="#dedede" stroke-width="0.6" fill="none"/><circle cx="4.1" cy="4.2" r="1.05" fill="#111"/></svg>
<div class="t" style="left:24.3px;top:423.84999999999997px;">create by node reference</div>
<svg class="abs" style="left:8.3px;top:441.2px" width="8" height="8" viewBox="0 0 8 8"><circle cx="4" cy="4" r="2.9" fill="#fbfbfb"/><path d="M1.7 5.9 A3 3 0 0 1 6.3 2" stroke="#1e1e1e" stroke-width="1" fill="none"/><path d="M6.3 2 A3 3 0 0 1 1.7 5.9" stroke="#dedede" stroke-width="0.6" fill="none"/></svg>
<div class="t" style="left:24.3px;top:438.29999999999995px;">assign</div>
<div class="btn gray" style="left:228px;top:410px;width:21px;height:14px"><svg width="19" height="12" style="position:absolute;left:0;top:0"><path d="M5.5 4 L12.5 4 L9 8.3 Z" fill="#111"/></svg></div>
<div class="btn gray" style="left:250px;top:410px;width:131px;height:14px;line-height:11.4px">rectangular</div>
<div class="btn gray" style="left:414px;top:410px;width:164px;height:14px;line-height:11.4px">relative size =</div>
<div class="btn" style="left:578px;top:410px;width:120px;height:14px;background:#fff;border-top:1px solid #666;border-left:1px solid #666;line-height:12px;text-align:right;padding-right:1px">10.000</div>
<div class="abs" style="left:228px;top:438px;width:110px;height:15px;background:#2ee0e8"></div>
<div class="btn yel" style="left:229px;top:439px;width:108px;height:13px;line-height:11px">node</div>
<div class="btn yel" style="left:359.2px;top:438.2px;width:109.6px;height:14.3px;line-height:11.6px">node</div>
<div class="btn yel" style="left:491px;top:438.2px;width:109.6px;height:14.3px;line-height:11.6px">node</div>
<div class="t" style="left:228.5px;top:452.4px;">origin node</div>
<svg class="abs" style="left:366.0px;top:455.3px" width="8" height="8" viewBox="0 0 8 8"><circle cx="4" cy="4" r="2.9" fill="#fbfbfb"/><path d="M1.7 5.9 A3 3 0 0 1 6.3 2" stroke="#1e1e1e" stroke-width="1" fill="none"/><path d="M6.3 2 A3 3 0 0 1 1.7 5.9" stroke="#dedede" stroke-width="0.6" fill="none"/></svg>
<div class="t" style="left:382px;top:452.4px;">x-axis</div>
<svg class="abs" style="left:366.0px;top:469.7px" width="8" height="8" viewBox="0 0 8 8"><circle cx="4" cy="4" r="2.9" fill="#fbfbfb"/><path d="M1.7 5.9 A3 3 0 0 1 6.3 2" stroke="#1e1e1e" stroke-width="1" fill="none"/><path d="M6.3 2 A3 3 0 0 1 1.7 5.9" stroke="#dedede" stroke-width="0.6" fill="none"/><circle cx="4.1" cy="4.2" r="1.05" fill="#111"/></svg>
<div class="t" style="left:382px;top:466.8px;">z-axis</div>
<svg class="abs" style="left:498.0px;top:455.3px" width="8" height="8" viewBox="0 0 8 8"><circle cx="4" cy="4" r="2.9" fill="#fbfbfb"/><path d="M1.7 5.9 A3 3 0 0 1 6.3 2" stroke="#1e1e1e" stroke-width="1" fill="none"/><path d="M6.3 2 A3 3 0 0 1 1.7 5.9" stroke="#dedede" stroke-width="0.6" fill="none"/><circle cx="4.1" cy="4.2" r="1.05" fill="#111"/></svg>
<div class="t" style="left:513px;top:452.4px;">yz-plane</div>
<div class="btn" style="left:721px;top:410px;width:66px;height:13.5px;background:#5fbf5f;border-top:1px solid #8ad48a;border-left:1px solid #8ad48a;border-right:1px solid #2f6a2f;border-bottom:1px solid #2f6a2f;line-height:11.5px"><div style="position:absolute;left:0;top:0;right:0;bottom:0;border:1px solid #1c3a1c"></div>create</div>
<div class="btn" style="left:721px;top:423.5px;width:66px;height:14.3px;background:#5fbf5f;border-top:1px solid #7ccc7c;border-left:1px solid #7ccc7c;border-right:1px solid #3a7a3a;border-bottom:1px solid #3a7a3a;line-height:12.3px">reject</div>
<div class="btn" style="left:721px;top:437.8px;width:66px;height:14.4px;background:#6b7fd9;border-top:1px solid #8796e2;border-left:1px solid #8796e2;border-right:1px solid #3c4a8c;border-bottom:1px solid #3c4a8c;line-height:13.2px">review</div>
<div class="btn" style="left:721px;top:496px;width:66px;height:14.5px;background:#c46060;border-top:1px solid #d88888;border-left:1px solid #d88888;border-right:1px solid #7a3636;border-bottom:1px solid #7a3636;line-height:12.5px">return</div>
</div>
</body></html>
